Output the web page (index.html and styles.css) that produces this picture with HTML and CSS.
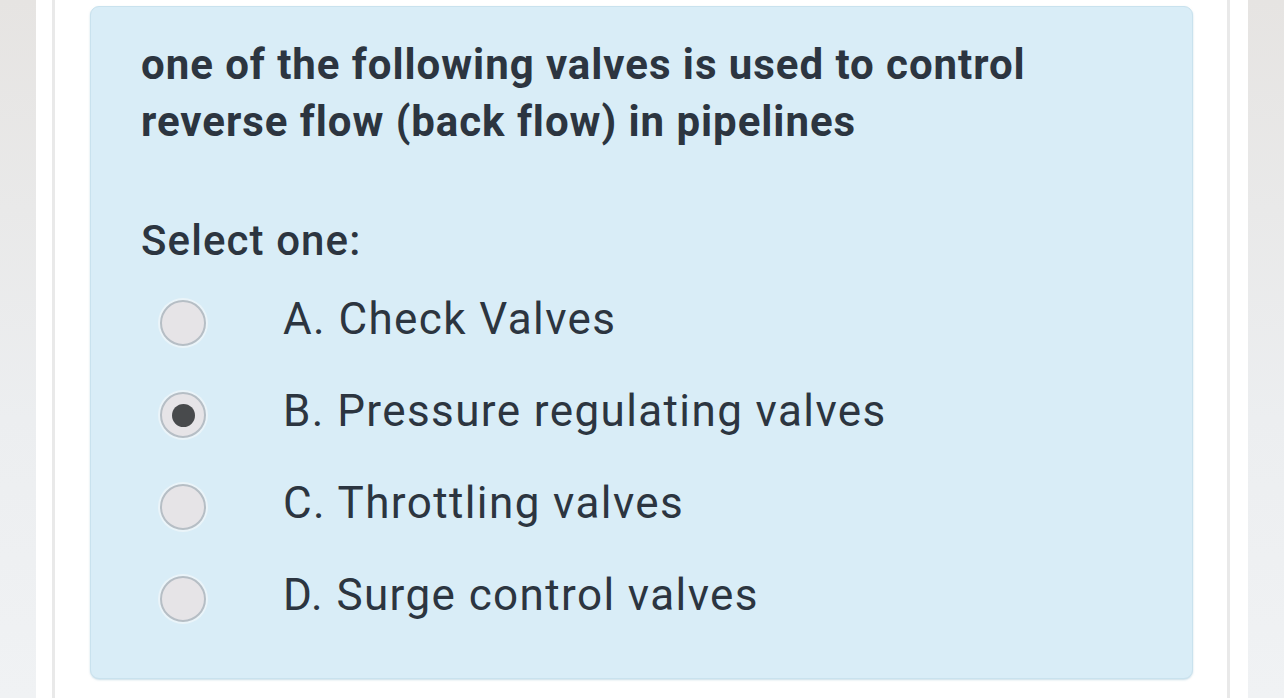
FILE: index.html
```html
<!DOCTYPE html>
<html>
<head>
<meta charset="utf-8">
<link rel="stylesheet" href="styles.css">
</head>
<body>
<div class="page">
  <div class="side side-left"></div>
  <div class="panel">
    <div class="inner">
      <div class="qbox">
        <div class="qtext">one of the following valves is used to control<br>reverse flow (back flow) in pipelines</div>
        <div class="prompt">Select one:</div>
        <div class="answers">
          <div class="opt"><span class="radio"></span><span class="label">A. Check Valves</span></div>
          <div class="opt"><span class="radio checked"></span><span class="label">B. Pressure regulating valves</span></div>
          <div class="opt"><span class="radio"></span><span class="label">C. Throttling valves</span></div>
          <div class="opt"><span class="radio"></span><span class="label">D. Surge control valves</span></div>
        </div>
      </div>
    </div>
  </div>
  <div class="side side-right"></div>
</div>
</body>
</html>
```

FILE: styles.css
```css
html, body {
  margin: 0;
  padding: 0;
  height: 100%;
  overflow: hidden;
}
body {
  font-family: Roboto, "Liberation Sans", sans-serif;
  color: #2c3540;
}
.page {
  display: flex;
  height: 698px;
}
.side {
  width: 36px;
  flex: none;
  background: linear-gradient(#e6e4e2, #eceef0 60%, #f0f2f4);
}
.panel {
  flex: 1;
  background: #ffffff;
  padding: 0 18px 0 16px;
  display: flex;
}
.inner {
  flex: 1;
  border-left: 3px solid #e9e9e9;
  border-right: 3px solid #e9e9e9;
  padding: 6px 34px 0 35px;
}
.qbox {
  height: 671px;
  background: #d9edf7;
  border: 1px solid #c9e2ee;
  border-radius: 9px;
  padding: 0 0 0 50px;
  box-shadow: 0 1px 2px rgba(150, 190, 210, 0.5);
}
.qtext {
  font-weight: 700;
  font-size: 42px;
  line-height: 57px;
  letter-spacing: 0.95px;
  padding-top: 29px;
}
.prompt {
  font-size: 42px;
  font-weight: 500;
  line-height: 54px;
  letter-spacing: 1.1px;
  padding-top: 64px;
}
.answers {
  display: flex;
  flex-direction: column;
  padding-left: 19px;
  padding-top: 5px;
}
.opt {
  display: flex;
  align-items: center;
  height: 92px;
}
.radio {
  width: 42px;
  height: 42px;
  margin-top: 8px;
  border-radius: 50%;
  background: #e6e4e7;
  border: 2px solid #b6bec5;
  box-shadow: 0 0 0 2px #eaf4f9;
  flex: none;
  display: flex;
  align-items: center;
  justify-content: center;
}
.radio.checked::after {
  content: "";
  width: 23px;
  height: 23px;
  border-radius: 50%;
  background: #484a4c;
}
.label {
  margin-left: 77px;
  font-size: 44px;
  font-weight: 400;
  letter-spacing: 1.4px;
}
```
